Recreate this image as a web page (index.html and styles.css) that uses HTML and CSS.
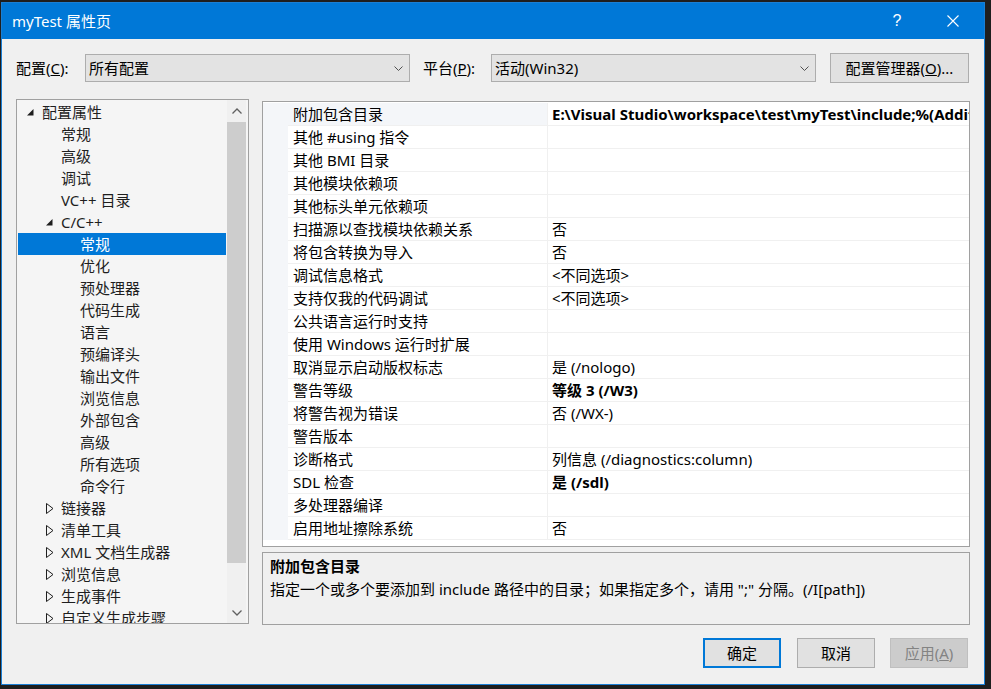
FILE: index.html
```html
<!DOCTYPE html>
<html>
  <head>
    <meta charset="utf-8">
    <title>myTest 属性页</title>
    <link rel="stylesheet" href="styles.css">
  </head>
  <body>
    <div class="window">
      <div class="titlebar">
        <span class="title">myTest 属性页</span>
        <span class="help">?</span>
        <svg class="close" width="12" height="12" viewBox="0 0 12 12">
          <path d="M0.5 0.5 L11.5 11.5 M11.5 0.5 L0.5 11.5" stroke="#fff" stroke-width="1.1" fill="none"/>
        </svg>
      </div>

      <div class="content">
        <div class="config-row">
          <span class="label label-config">配置(<u>C</u>):</span>
          <div class="select">
            <span>所有配置</span>
            <svg class="chevron" width="9" height="5" viewBox="0 0 9 5"><path d="M0.5 0.5 L4.5 4.5 L8.5 0.5" stroke="#505050" fill="none"/></svg>
          </div>
          <span class="label label-platform">平台(<u>P</u>):</span>
          <div class="select">
            <span>活动(Win32)</span>
            <svg class="chevron" width="9" height="5" viewBox="0 0 9 5"><path d="M0.5 0.5 L4.5 4.5 L8.5 0.5" stroke="#505050" fill="none"/></svg>
          </div>
          <div class="btn btn-manager">配置管理器(<u>O</u>)...</div>
        </div>

        <div class="main">
          <div class="tree">
            <div class="tree-list">
              <div class="item l0"><span class="twisty"><svg width="7" height="7" viewBox="0 0 7 7"><path d="M0 6.5 L6.5 0 L6.5 6.5 Z" fill="#1e1e1e"/></svg></span>配置属性</div>
              <div class="item l1"><span class="twisty"></span>常规</div>
              <div class="item l1"><span class="twisty"></span>高级</div>
              <div class="item l1"><span class="twisty"></span>调试</div>
              <div class="item l1"><span class="twisty"></span>VC++ 目录</div>
              <div class="item l1"><span class="twisty"><svg width="7" height="7" viewBox="0 0 7 7"><path d="M0 6.5 L6.5 0 L6.5 6.5 Z" fill="#1e1e1e"/></svg></span>C/C++</div>
              <div class="item l2 selected"><span class="twisty"></span>常规</div>
              <div class="item l2"><span class="twisty"></span>优化</div>
              <div class="item l2"><span class="twisty"></span>预处理器</div>
              <div class="item l2"><span class="twisty"></span>代码生成</div>
              <div class="item l2"><span class="twisty"></span>语言</div>
              <div class="item l2"><span class="twisty"></span>预编译头</div>
              <div class="item l2"><span class="twisty"></span>输出文件</div>
              <div class="item l2"><span class="twisty"></span>浏览信息</div>
              <div class="item l2"><span class="twisty"></span>外部包含</div>
              <div class="item l2"><span class="twisty"></span>高级</div>
              <div class="item l2"><span class="twisty"></span>所有选项</div>
              <div class="item l2"><span class="twisty"></span>命令行</div>
              <div class="item l1"><span class="twisty"><svg width="8" height="11" viewBox="0 0 8 11"><path d="M0.5 0.5 L7 5.5 L0.5 10.5 Z" stroke="#1e1e1e" fill="none"/></svg></span>链接器</div>
              <div class="item l1"><span class="twisty"><svg width="8" height="11" viewBox="0 0 8 11"><path d="M0.5 0.5 L7 5.5 L0.5 10.5 Z" stroke="#1e1e1e" fill="none"/></svg></span>清单工具</div>
              <div class="item l1"><span class="twisty"><svg width="8" height="11" viewBox="0 0 8 11"><path d="M0.5 0.5 L7 5.5 L0.5 10.5 Z" stroke="#1e1e1e" fill="none"/></svg></span>XML 文档生成器</div>
              <div class="item l1"><span class="twisty"><svg width="8" height="11" viewBox="0 0 8 11"><path d="M0.5 0.5 L7 5.5 L0.5 10.5 Z" stroke="#1e1e1e" fill="none"/></svg></span>浏览信息</div>
              <div class="item l1"><span class="twisty"><svg width="8" height="11" viewBox="0 0 8 11"><path d="M0.5 0.5 L7 5.5 L0.5 10.5 Z" stroke="#1e1e1e" fill="none"/></svg></span>生成事件</div>
              <div class="item l1"><span class="twisty"><svg width="8" height="11" viewBox="0 0 8 11"><path d="M0.5 0.5 L7 5.5 L0.5 10.5 Z" stroke="#1e1e1e" fill="none"/></svg></span>自定义生成步骤</div>
            </div>
            <div class="scrollbar">
              <div class="arrow">
                <svg width="10" height="6" viewBox="0 0 10 6"><path d="M0.5 5.5 L5 1 L9.5 5.5" stroke="#606060" stroke-width="1.3" fill="none"/></svg>
              </div>
              <div class="track"><div class="thumb"></div></div>
              <div class="arrow">
                <svg width="10" height="6" viewBox="0 0 10 6"><path d="M0.5 0.5 L5 5 L9.5 0.5" stroke="#606060" stroke-width="1.3" fill="none"/></svg>
              </div>
            </div>
          </div>

          <div class="right">
            <div class="grid">
              <div class="row active"><div class="strip"></div><div class="name">附加包含目录</div><div class="value bold">E:\Visual Studio\workspace\test\myTest\include;%(AdditionalIncludeDirectories)</div></div>
              <div class="row"><div class="strip"></div><div class="name">其他 #using 指令</div><div class="value"></div></div>
              <div class="row"><div class="strip"></div><div class="name">其他 BMI 目录</div><div class="value"></div></div>
              <div class="row"><div class="strip"></div><div class="name">其他模块依赖项</div><div class="value"></div></div>
              <div class="row"><div class="strip"></div><div class="name">其他标头单元依赖项</div><div class="value"></div></div>
              <div class="row"><div class="strip"></div><div class="name">扫描源以查找模块依赖关系</div><div class="value">否</div></div>
              <div class="row"><div class="strip"></div><div class="name">将包含转换为导入</div><div class="value">否</div></div>
              <div class="row"><div class="strip"></div><div class="name">调试信息格式</div><div class="value">&lt;不同选项&gt;</div></div>
              <div class="row"><div class="strip"></div><div class="name">支持仅我的代码调试</div><div class="value">&lt;不同选项&gt;</div></div>
              <div class="row"><div class="strip"></div><div class="name">公共语言运行时支持</div><div class="value"></div></div>
              <div class="row"><div class="strip"></div><div class="name">使用 Windows 运行时扩展</div><div class="value"></div></div>
              <div class="row"><div class="strip"></div><div class="name">取消显示启动版权标志</div><div class="value">是 (/nologo)</div></div>
              <div class="row"><div class="strip"></div><div class="name">警告等级</div><div class="value bold">等级 3 (/W3)</div></div>
              <div class="row"><div class="strip"></div><div class="name">将警告视为错误</div><div class="value">否 (/WX-)</div></div>
              <div class="row"><div class="strip"></div><div class="name">警告版本</div><div class="value"></div></div>
              <div class="row"><div class="strip"></div><div class="name">诊断格式</div><div class="value">列信息 (/diagnostics:column)</div></div>
              <div class="row"><div class="strip"></div><div class="name">SDL 检查</div><div class="value bold">是 (/sdl)</div></div>
              <div class="row"><div class="strip"></div><div class="name">多处理器编译</div><div class="value"></div></div>
              <div class="row"><div class="strip"></div><div class="name">启用地址擦除系统</div><div class="value">否</div></div>
            </div>
            <div class="desc">
              <div class="desc-title">附加包含目录</div>
              <div class="desc-text">指定一个或多个要添加到 include 路径中的目录；如果指定多个，请用 ";" 分隔。(/I[path])</div>
            </div>
          </div>
        </div>

        <div class="buttons">
          <div class="btn btn-ok">确定</div>
          <div class="btn btn-cancel">取消</div>
          <div class="btn btn-apply disabled">应用(<u>A</u>)</div>
        </div>
      </div>
    </div>
  </body>
</html>
```

FILE: styles.css
```css
* {
  box-sizing: border-box;
}

body {
  margin: 0;
  background: #1e1e1e;
  font-family: "Noto Sans", "Noto Sans CJK SC", sans-serif;
  font-size: 15px;
  color: #000;
}

.window {
  width: 984px;
  height: 683px;
  margin: 2px 0 0 1px;
  border: 1px solid #1a7fd4;
  background: #f0f0f0;
  display: flex;
  flex-direction: column;
}

/* title bar */

.titlebar {
  height: 36px;
  flex: none;
  background: #0078d7;
  color: #fff;
  display: flex;
  align-items: center;
  padding-left: 10px;
}

.title {
  flex: 1;
  line-height: 20px;
}

.help {
  width: 20px;
  text-align: center;
  margin-right: 40px;
  font-size: 16px;
  font-family: "Liberation Sans", sans-serif;
  font-weight: 300;
}

.close {
  margin-right: 25px;
}

/* content */

.content {
  flex: 1;
  padding: 14px 14px 0 14px;
  display: flex;
  flex-direction: column;
}

.config-row {
  display: flex;
  align-items: center;
  height: 30px;
}

.label {
  line-height: 20px;
  white-space: nowrap;
}

.label-config {
  width: 69px;
}

.label-platform {
  width: 68px;
  margin-left: 13px;
}

.select {
  width: 325px;
  height: 28px;
  background: #e3e3e3;
  border: 1px solid #adadad;
  display: flex;
  align-items: center;
  padding: 0 6px 0 3px;
  line-height: 20px;
}

.select span {
  flex: 1;
}

.chevron {
  margin-right: 0;
}

.btn {
  height: 30px;
  background: #e1e1e1;
  border: 1px solid #adadad;
  display: flex;
  align-items: center;
  justify-content: center;
  line-height: 20px;
  white-space: nowrap;
}

.btn-manager {
  width: 139px;
  margin-left: 14px;
}

/* main area */

.main {
  display: flex;
  gap: 13px;
  margin-top: 16px;
  height: 526px;
}

.tree {
  width: 233px;
  height: 525px;
  border: 1px solid #a0a0a0;
  background: #f5f5f5;
  display: flex;
  overflow: hidden;
}

.tree-list {
  flex: 1;
  padding: 1px 1px 0 1px;
  overflow: hidden;
}

.item {
  height: 22px;
  line-height: 22px;
  display: flex;
  align-items: center;
  white-space: nowrap;
  color: #1e1e1e;
}

.item.l0 {
  padding-left: 5px;
}

.item.l1 {
  padding-left: 24px;
}

.item.l2 {
  padding-left: 43px;
}

.item.selected {
  background: #0078d7;
  color: #fff;
}

.twisty {
  width: 19px;
  height: 22px;
  flex: none;
  display: flex;
  align-items: center;
  padding-left: 4px;
}

.scrollbar {
  width: 19px;
  margin-right: 2px;
  background: #f0f0f0;
  display: flex;
  flex-direction: column;
}

.arrow {
  height: 21px;
  display: flex;
  align-items: center;
  justify-content: center;
}

.track {
  flex: 1;
  padding-top: 1px;
}

.thumb {
  height: 441px;
  background: #cdcdcd;
}

/* property grid */

.right {
  width: 708px;
  padding-top: 2px;
  display: flex;
  flex-direction: column;
  gap: 5px;
}

.grid {
  height: 446px;
  background: #fff;
  border: 1px solid #a0a0a0;
  padding-top: 1px;
  overflow: hidden;
}

.row {
  display: grid;
  grid-template-columns: 25px 260px 1fr;
  height: 23px;
}

.strip {
  background: #f4f6f9;
}

.name {
  border-right: 1px solid #f0f0f0;
  border-bottom: 1px solid #f0f0f0;
  padding-left: 5px;
  line-height: 22px;
  white-space: nowrap;
  overflow: hidden;
}

.row.active .name {
  background: #f4f6f9;
}

.value {
  border-bottom: 1px solid #f0f0f0;
  padding-left: 4px;
  line-height: 22px;
  white-space: nowrap;
  overflow: hidden;
}

.bold {
  font-weight: bold;
}

.desc {
  height: 73px;
  border: 1px solid #a0a0a0;
  background: #f0f0f0;
  padding: 2px 7px 0 7px;
}

.desc-title {
  font-weight: bold;
  line-height: 23px;
}

.desc-text {
  line-height: 23px;
  white-space: nowrap;
}

/* dialog buttons */

.buttons {
  display: flex;
  justify-content: flex-end;
  margin-top: 13px;
  padding-right: 2px;
}

.buttons .btn {
  width: 78px;
}

.btn-ok {
  border: 2px solid #0078d7;
  margin-right: 16px;
}

.btn-cancel {
  margin-right: 15px;
}

.btn.disabled {
  background: #cccccc;
  border-color: #bfbfbf;
  color: #838383;
}
```
